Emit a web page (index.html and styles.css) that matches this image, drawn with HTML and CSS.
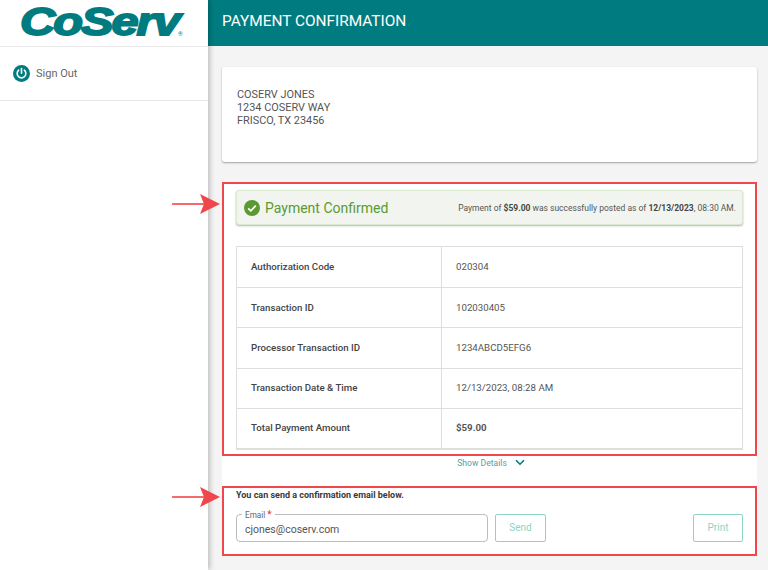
FILE: index.html
```html
<!DOCTYPE html>
<html lang="en">
<head>
<meta charset="utf-8">
<title>Payment Confirmation</title>
<link rel="stylesheet" href="styles.css">
</head>
<body>
<div class="app">
  <aside class="sidebar">
    <div class="brand"><span class="logo">CoServ</span><span class="reg">®</span></div>
    <div class="signout">
      <svg class="power" viewBox="0 0 16 16" width="17" height="17" aria-hidden="true">
        <circle cx="8" cy="8" r="8" fill="#007c80"/>
        <path d="M5.3 4.9a4.1 4.1 0 1 0 5.4 0" fill="none" stroke="#fff" stroke-width="1.5" stroke-linecap="round"/>
        <path d="M8 3.4v4.4" fill="none" stroke="#fff" stroke-width="1.5" stroke-linecap="round"/>
      </svg>
      <span>Sign Out</span>
    </div>
  </aside>
  <div class="content">
    <header class="topbar">PAYMENT CONFIRMATION</header>
    <main class="main">
      <section class="card address">
        <div>COSERV JONES</div>
        <div>1234 COSERV WAY</div>
        <div>FRISCO, TX 23456</div>
      </section>
      <section class="card details">
        <div class="alert">
          <svg class="check" viewBox="0 0 16 16" width="16" height="16" aria-hidden="true">
            <circle cx="8" cy="8" r="8" fill="#5b9a32"/>
            <path d="M4.2 8.3l2.6 2.6 5-5.2" fill="none" stroke="#fff" stroke-width="1.7"/>
          </svg>
          <span class="alert-title">Payment Confirmed</span>
          <span class="alert-msg">Payment of <b>$59.00</b> was successfully posted as of <b>12/13/2023</b>, 08:30 AM.</span>
        </div>
        <div class="table">
          <div class="row"><div class="label">Authorization Code</div><div class="value">020304</div></div>
          <div class="row"><div class="label">Transaction ID</div><div class="value">102030405</div></div>
          <div class="row"><div class="label">Processor Transaction ID</div><div class="value">1234ABCD5EFG6</div></div>
          <div class="row"><div class="label">Transaction Date &amp; Time</div><div class="value">12/13/2023, 08:28 AM</div></div>
          <div class="row"><div class="label">Total Payment Amount</div><div class="value strong">$59.00</div></div>
        </div>
        <div class="toggle">
          <span>Show Details</span>
          <svg viewBox="0 0 10 7" width="10" height="7" aria-hidden="true"><path d="M1 1.2l4 4 4-4" fill="none" stroke="#007c80" stroke-width="1.6"/></svg>
        </div>
        <p class="hint">You can send a confirmation email below.</p>
        <div class="actions">
          <div class="field">
            <span class="field-label">Email <em>*</em></span>
            <span class="field-value">cjones@coserv.com</span>
          </div>
          <button class="btn" type="button">Send</button>
          <button class="btn print" type="button">Print</button>
        </div>
        <div class="mark mark-top"></div>
        <div class="mark mark-bottom"></div>
      </section>
      <svg class="arrow arrow-top" viewBox="0 0 48 20" width="48" height="20" aria-hidden="true"><path d="M0 9.2h32v1.6H0z" fill="#f0474c"/><path d="M28 0l20 10-20 10 4-10z" fill="#f0474c"/></svg>
      <svg class="arrow arrow-bottom" viewBox="0 0 48 20" width="48" height="20" aria-hidden="true"><path d="M0 9.2h32v1.6H0z" fill="#f0474c"/><path d="M28 0l20 10-20 10 4-10z" fill="#f0474c"/></svg>
    </main>
  </div>
</div>
</body>
</html>
```
FILE: styles.css
```css
* { box-sizing: border-box; }
html, body { margin: 0; height: 100%; overflow: hidden; }
body { font-family: Roboto, "Liberation Sans", sans-serif; color: #555; background: #f4f4f4; }
.app { display: flex; height: 570px; width: 768px; }

.sidebar { width: 208px; flex: none; background: #fff; box-shadow: 2px 0 5px rgba(0,0,0,.22); position: relative; z-index: 2; }
.brand { height: 47px; border-bottom: 1px solid #e8e8e8; padding: 0 0 0 20px; display: flex; align-items: flex-start; overflow: hidden; }
.logo { font-family: "Liberation Sans", sans-serif; font-weight: 700; font-style: italic; font-size: 39px; line-height: 44px; letter-spacing: -1.6px; color: #007c80; -webkit-text-stroke: 1.8px #007c80; transform: scaleX(1.25); transform-origin: left center; }
.reg { font-size: 6px; color: #007c80; margin: 30px 0 0 31px; }
.signout { height: 54px; border-bottom: 1px solid #e8e8e8; display: flex; align-items: center; gap: 6px; padding: 0 0 1px 13px; font-size: 11px; color: #666; }
.power { flex: none; }

.content { flex: 1; min-width: 0; display: flex; flex-direction: column; }
.topbar { height: 46px; flex: none; background: #007c80; color: #fff; font-size: 15.4px; line-height: 42px; padding-left: 14px; }
.main { position: relative; flex: 1; padding: 21px 11px 0 14px; }

.card { background: #fff; }
.address { height: 95px; padding: 21px 15px 0; font-size: 10.9px; line-height: 13px; border-radius: 3px; box-shadow: 0 1px 2px rgba(0,0,0,.35); color: #555; }

.details { position: relative; margin-top: 20px; height: 374px; padding: 8px 14px 0; }
.alert { height: 35px; display: flex; align-items: center; padding: 0 6px 0 7px; background: #f2f5ef; border: 1px solid #dde8d2; border-radius: 3px; box-shadow: 0 1px 2px rgba(0,0,0,.3); }
.check { flex: none; }
.alert-title { margin-left: 5px; font-size: 14px; color: #5b9a32; }
.alert-msg { margin-left: auto; font-size: 8.5px; color: #555; }
.alert-msg b { font-weight: 700; color: #444; }

.table { margin-top: 21px; border: 1px solid #dedede; border-bottom-width: 2px; }
.row { display: flex; height: 40.2px; align-items: stretch; font-size: 9.7px; }
.row + .row { border-top: 1px solid #dedede; }
.label { width: 205px; flex: none; display: flex; align-items: center; padding: 0 0 1px 14px; font-weight: 500; color: #444; border-right: 1px solid #dedede; }
.value { flex: 1; display: flex; align-items: center; padding: 0 0 1px 14px; color: #555; }
.strong { font-weight: 700; }

.toggle { display: flex; align-items: center; justify-content: center; gap: 8px; margin-top: 7px; height: 12px; font-size: 8.6px; color: #5a9ea1; padding-left: 3px; }
.hint { margin: 20px 0 0; font-size: 9px; line-height: 12px; font-weight: 700; color: #3a3a3a; }
.actions { display: flex; align-items: flex-start; margin-top: 13px; }
.field { position: relative; width: 252px; height: 28px; border: 1px solid #bdbdbd; border-radius: 4px; padding-left: 8px; font-size: 10.5px; line-height: 30px; color: #555; }
.field-label { position: absolute; left: 5px; top: -6px; padding: 0 3px; background: #fff; font-size: 8.2px; line-height: 11px; color: #666; }
.field-label em { font-style: normal; font-size: 10px; color: #d33; }
.btn { width: 51px; height: 28px; margin-left: 7px; border: 1px solid #8fd3c4; border-radius: 2px; background: #fff; font: 10px Roboto, sans-serif; color: #8fd3c4; padding: 0; }
.print { width: 50px; margin-left: auto; }

.mark { position: absolute; left: 0; width: 535px; border: 2px solid #f0474c; pointer-events: none; }
.mark-top { top: 0; height: 274px; }
.mark-bottom { top: 304px; height: 70px; }
.arrow { position: absolute; left: -36px; z-index: 3; }
.arrow-top { top: 148px; }
.arrow-bottom { top: 441px; }
```
